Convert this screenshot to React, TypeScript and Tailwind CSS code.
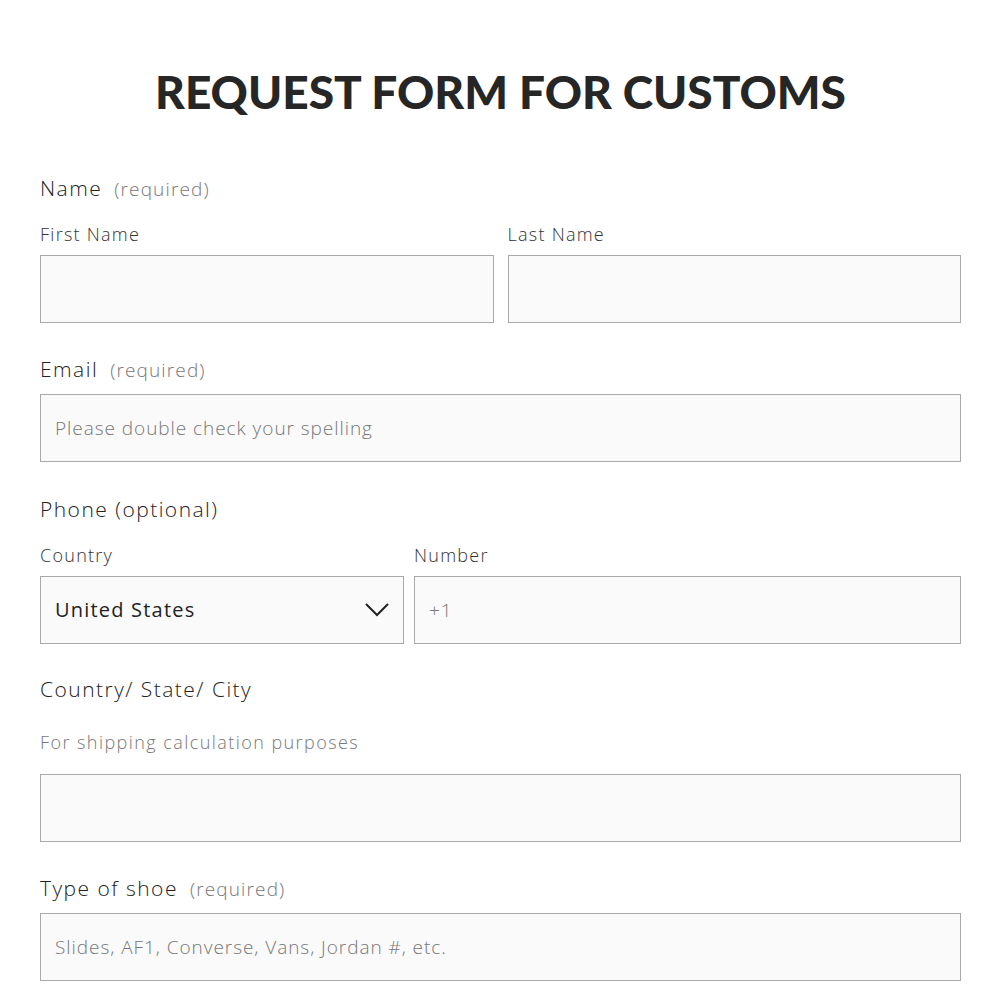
import React from 'react';

const body = { fontFamily: '"Open Sans", "Liberation Sans", sans-serif' };

function Label({ text, note }: { text: string; note?: string }) {
  return (
    <div className="flex items-baseline gap-3 text-[21px] leading-[28px] font-light tracking-[0.07em] text-[#222]">
      <span>{text}</span>
      {note && <span className="text-[19px] tracking-[0.06em] text-[#777]">{note}</span>}
    </div>
  );
}

function SubLabel({ text }: { text: string }) {
  return (
    <div className="text-[18px] leading-[24px] font-light tracking-[0.07em] text-[#333] mb-[9px]">{text}</div>
  );
}

function Field({ placeholder }: { placeholder?: string }) {
  return (
    <div className="h-[68px] w-full border border-[#a9a9a9] bg-[#fafafa] flex items-center px-[14px] text-[19px] font-light tracking-[0.05em] text-[#777]">
      {placeholder}
    </div>
  );
}

export default function App() {
  return (
    <div className="min-h-screen bg-white pl-[40px] pr-[39px] pt-[62px]" style={body}>
      <h1
        className="text-center text-[46px] leading-[60px] font-black text-[#262626]"
        style={{ fontFamily: 'Lato, "Liberation Sans", sans-serif' }}
      >
        REQUEST FORM FOR CUSTOMS
      </h1>

      {/* Name */}
      <div className="mt-[52px]">
        <Label text="Name" note="(required)" />
        <div className="mt-[19px] grid grid-cols-2 gap-[14px]">
          <div>
            <SubLabel text="First Name" />
            <Field />
          </div>
          <div>
            <SubLabel text="Last Name" />
            <Field />
          </div>
        </div>
      </div>

      {/* Email */}
      <div className="mt-[32px]">
        <Label text="Email" note="(required)" />
        <div className="mt-[10px]">
          <Field placeholder="Please double check your spelling" />
        </div>
      </div>

      {/* Phone */}
      <div className="mt-[33px]">
        <Label text="Phone (optional)" />
        <div className="mt-[20px] flex gap-[10px]">
          <div className="w-[364px] shrink-0">
            <SubLabel text="Country" />
            <div className="h-[68px] border border-[#a9a9a9] bg-[#fafafa] flex items-center justify-between pl-[14px] pr-[14px] text-[20px] font-normal tracking-[0.06em] text-[#222]">
              <span>United States</span>
              <svg width="24" height="14" viewBox="0 0 24 14" fill="none" stroke="#222" strokeWidth="2">
                <path d="M1 1l11 11L23 1" />
              </svg>
            </div>
          </div>
          <div className="flex-1">
            <SubLabel text="Number" />
            <Field placeholder="+1" />
          </div>
        </div>
      </div>

      {/* Location */}
      <div className="mt-[31px]">
        <Label text="Country/ State/ City" />
        <div className="mt-[27px] text-[18px] leading-[24px] font-light tracking-[0.08em] text-[#777]">
          For shipping calculation purposes
        </div>
        <div className="mt-[20px]">
          <Field />
        </div>
      </div>

      {/* Shoe */}
      <div className="mt-[32px]">
        <Label text="Type of shoe" note="(required)" />
        <div className="mt-[10px]">
          <Field placeholder="Slides, AF1, Converse, Vans, Jordan #, etc." />
        </div>
      </div>
    </div>
  );
}
